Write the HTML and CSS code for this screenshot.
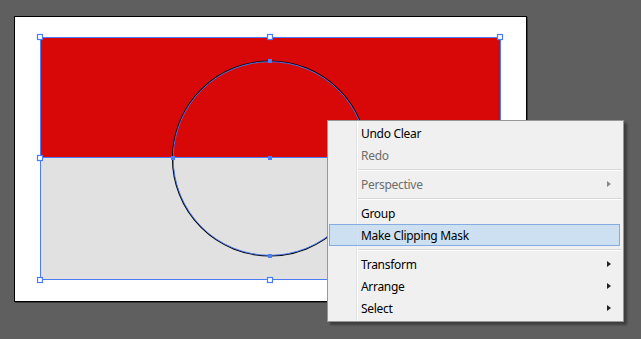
FILE: index.html
```html
<!DOCTYPE html>
<html>
<head>
<meta charset="utf-8">
<link rel="stylesheet" href="styles.css">
</head>
<body>
<div class="workspace">
  <div class="artboard"></div>
  <svg class="art" width="641" height="339" viewBox="0 0 641 339">
    <rect x="40" y="37" width="460" height="121" fill="#d90808"/>
    <rect x="40" y="158" width="460" height="122" fill="#e1e1e1"/>
    <circle cx="270" cy="158.5" r="97.4" fill="none" stroke="#000" stroke-width="1.4"/>
    <circle cx="270" cy="158.5" r="96.8" fill="none" stroke="#4c7cf8" stroke-width="0.9"/>
    <rect x="40.5" y="37.5" width="460" height="242" fill="none" stroke="#4c7cf8" stroke-width="1"/>
    <line x1="40" y1="157.5" x2="500" y2="157.5" stroke="#4c7cf8" stroke-width="1"/>
    <g fill="#4c7cf8">
      <rect x="268" y="59" width="4" height="4"/>
      <rect x="171" y="156" width="4" height="4"/>
      <rect x="268" y="156" width="4" height="4"/>
      <rect x="268" y="254" width="4" height="4"/>
    </g>
    <g fill="#fff" stroke="#4c7cf8" stroke-width="1.2">
      <rect x="37.5" y="34.5" width="5" height="5"/>
      <rect x="267.5" y="34.5" width="5" height="5"/>
      <rect x="497.5" y="34.5" width="5" height="5"/>
      <rect x="37.5" y="155.5" width="5" height="5"/>
      <rect x="37.5" y="277.5" width="5" height="5"/>
      <rect x="267.5" y="277.5" width="5" height="5"/>
    </g>
  </svg>
  <div class="menu">
    <div class="item">Undo Clear</div>
    <div class="item disabled">Redo</div>
    <div class="sep"></div>
    <div class="item disabled sub">Perspective</div>
    <div class="sep"></div>
    <div class="item">Group</div>
    <div class="item hover">Make Clipping Mask</div>
    <div class="sep"></div>
    <div class="item sub">Transform</div>
    <div class="item sub">Arrange</div>
    <div class="item sub">Select</div>
  </div>
</div>
</body>
</html>
```
FILE: styles.css
```css
html, body {
  margin: 0;
  padding: 0;
}
body {
  background: #5f5f5f;
  width: 641px;
  height: 339px;
  overflow: hidden;
}
.workspace {
  position: relative;
  width: 641px;
  height: 339px;
}
.artboard {
  position: absolute;
  left: 14px;
  top: 16px;
  width: 511px;
  height: 284px;
  background: #fff;
  border: 1px solid #000;
  box-shadow: 1px 1px 0 #3a3a3a;
}
.art {
  position: absolute;
  left: 0;
  top: 0;
}
.menu {
  position: absolute;
  left: 327px;
  top: 120px;
  width: 293px;
  padding: 1px 1px 2px 1px;
  background-color: #f0f0f0;
  background-image: linear-gradient(to right, transparent 28px, #e2e3e3 28px, #e2e3e3 29px, #fff 29px, #fff 30px, transparent 30px);
  border: 1px solid #979797;
  box-shadow: 3px 3px 2px rgba(0, 0, 0, 0.35);
  font-family: "Noto Sans", "Open Sans", sans-serif;
  font-size: 12px;
  letter-spacing: -0.3px;
  color: #000;
}
.item {
  position: relative;
  height: 22px;
  line-height: 23px;
  padding-left: 32px;
  box-sizing: border-box;
  width: 291px;
}
.item.disabled {
  color: #6d6d6d;
}
.item.hover {
  background: rgba(196, 220, 243, 0.8);
  border: 1px solid #84ace0;
  line-height: 21px;
  padding-left: 31px;
}
.item.sub::after {
  content: "";
  position: absolute;
  right: 9px;
  top: 8px;
  width: 0;
  height: 0;
  border-left: 4px solid #222;
  border-top: 3.5px solid transparent;
  border-bottom: 3.5px solid transparent;
}
.item.disabled.sub::after {
  border-left-color: #8a8a8a;
}
.sep {
  height: 7px;
  margin-left: 29px;
  background: linear-gradient(to bottom, transparent 3px, #d7d7d7 3px, #d7d7d7 4px, #fff 4px, #fff 5px, transparent 5px);
}
```
